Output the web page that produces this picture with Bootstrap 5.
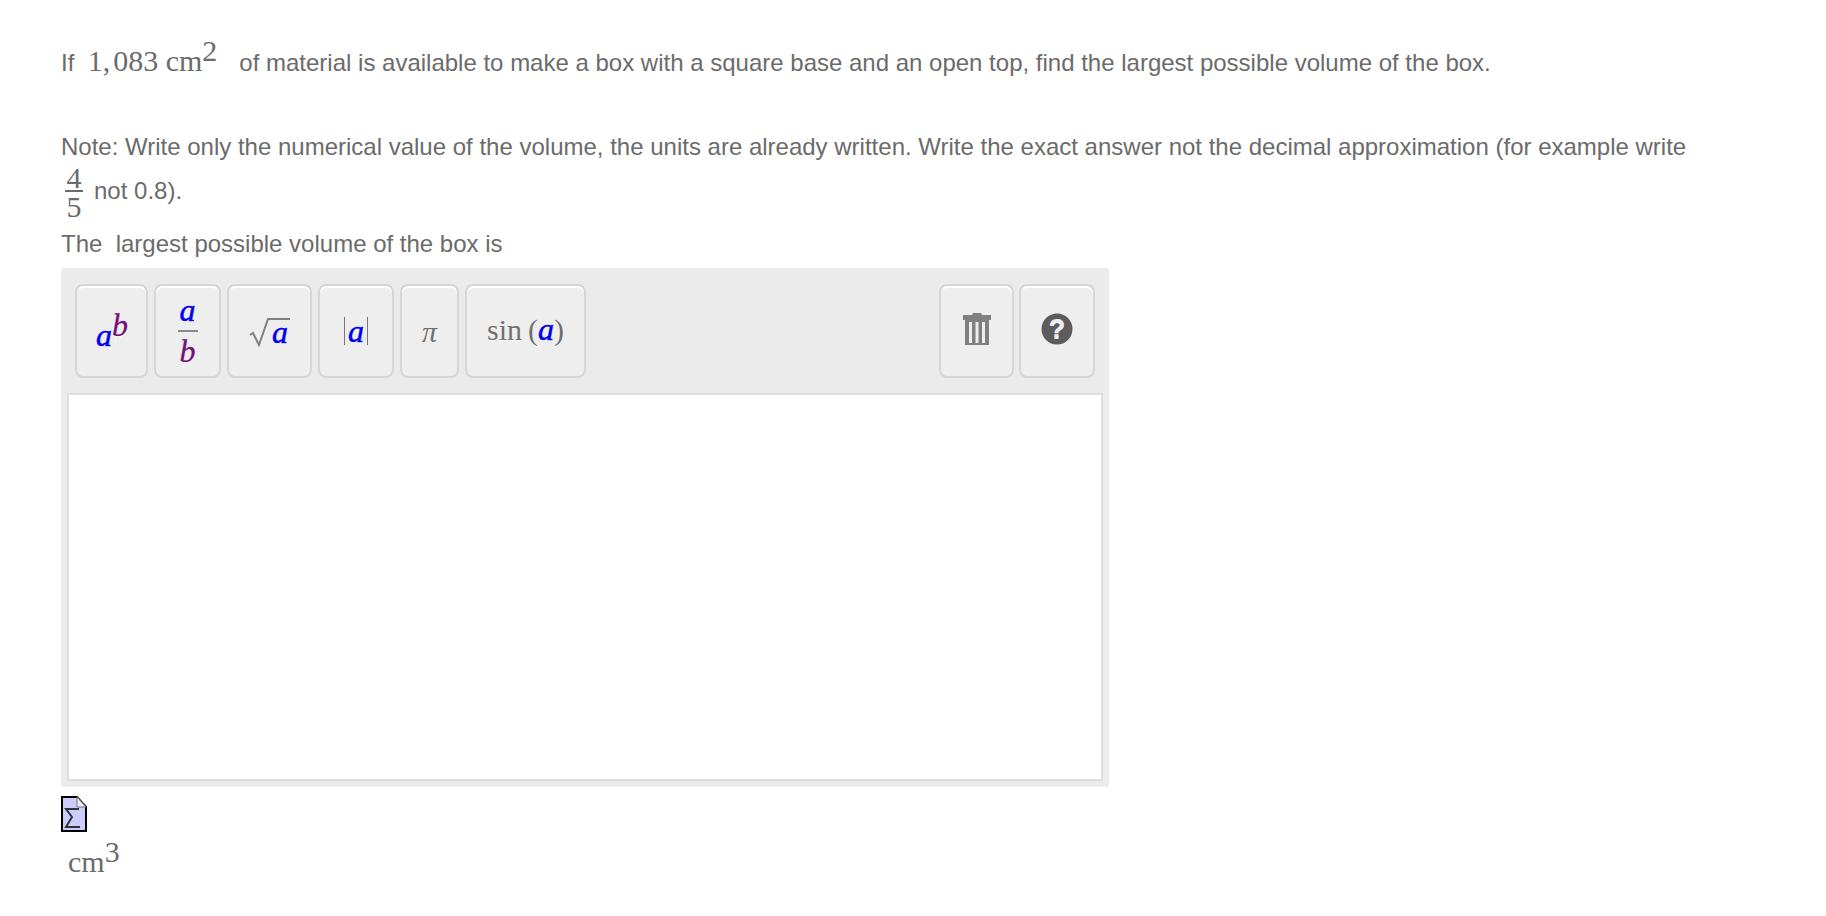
<!DOCTYPE html>
<html>
<head>
    <title>Box volume question</title>
    <link href="https://cdn.jsdelivr.net/npm/bootstrap@5.3.3/dist/css/bootstrap.min.css" rel="stylesheet">
    <style>
        body { font-family: "Liberation Sans", Arial, sans-serif; font-size: 24px; color: #6b6b6b; background: #fff; }
        .page-wrap { padding: 29px 61px 0 61px; }
        .q-line { margin: 0; line-height: 34px; }
        .q-first { height: 68px; line-height: 64px; margin-bottom: 33px; white-space: pre; }
        .q-note { height: 35px; white-space: nowrap; }
        .q-frac-line { height: 50px; margin-top: 2px; padding-left: 4px; display: flex; align-items: center; gap: 11px; }
        .q-frac-line > span:last-child { position: relative; top: -1px; }
        .q-ask { margin-top: 10px; height: 41px; white-space: pre; }
        .mth { font-family: "Liberation Serif", "Times New Roman", serif; font-size: 30px; margin-right: 2px; }
        .mth sup { font-size: 30px; top: -10px; line-height: 0; vertical-align: baseline; position: relative; }
        .cm-gap { margin-left: 3px; }
        .frac4 { display: inline-flex; flex-direction: column; align-items: center; font-family: "Liberation Serif", serif; font-size: 30px; line-height: 25px; width: 18px; }
        .frac4 span + span { border-top: 2px solid #6b6b6b; width: 18px; text-align: center; padding-top: 2px; }
        .mq-box { width: 1048px; height: 519px; background: #ebebeb; border-radius: 3px; padding: 16px 6px 5px 6px; }
        .mq-tools { height: 94px; padding: 0 8px; margin-bottom: 15px; }
        .mq-btn { height: 94px; background: #eee; border: 2px solid #d6d6d6; border-radius: 8px; box-shadow: inset 0 2px 0 #fff; font-family: "Liberation Serif", serif; font-size: 30px; color: #707070; padding: 0; display: flex; align-items: center; justify-content: center; text-shadow: 0 1px 0 #fff; }
        .mq-gap { gap: 6px; }
        .mq-gap-side { gap: 5px; }
        .w-pow { width: 73px; } .w-frac { width: 67px; } .w-sqrt { width: 85px; } .w-abs { width: 76px; }
        .w-pi { width: 59px; } .w-sin { width: 121px; } .w-side { width: 76px; } .w-trash { width: 75px; }
        .va { color: #0000f0; font-style: italic; font-size: 32px; -webkit-text-stroke: 0.5px #0000f0; line-height: 1; }
        .vb { color: #74107c; font-style: italic; font-size: 32px; -webkit-text-stroke: 0.3px #74107c; line-height: 1; }
        .pow-wrap { display: flex; align-items: flex-end; padding-top: 8px; padding-left: 1px; }
        .pow-b { position: relative; top: -10px; left: 0; }
        .btn-frac { display: flex; flex-direction: column; align-items: center; }
        .btn-frac .va { height: 36px; line-height: 32px; }
        .btn-frac .vb { border-top: 2px solid #8a8a8a; width: 20px; text-align: center; height: 38px; line-height: 38px; }
        .sq-wrap { display: flex; align-items: flex-start; margin-top: 4px; }
        .sq-bar { border-top: 2px solid #808080; padding: 0 2px 0 3px; height: 30px; line-height: 24px; }
        .abs-wrap { display: flex; align-items: center; gap: 3px; }
        .abs-bar { width: 1px; height: 28px; background: #777; }
        .sin-wrap { display: flex; align-items: baseline; white-space: pre; margin-bottom: 3px; }
        .side-ico { margin-bottom: 4px; }
        .mq-editor { height: 388px; background: #fff; border: 2px solid #dedede; }
        .mq-doc { display: block; margin-top: 9px; }
        .unit-line { margin: 0 0 0 7px; line-height: 40px; padding-top: 10px; }
    </style>
</head>
<body>
    <div class="page-wrap">
        <p class="q-line q-first">If  <span class="mth">1,<span class="cm-gap">083</span> cm<sup>2</sup></span>   of material is available to make a box with a square base and an open top, find the largest possible volume of the box.</p>
        <p class="q-line q-note">Note: Write only the numerical value of the volume, the units are already written. Write the exact answer not the decimal approximation (for example write</p>
        <div class="q-frac-line"><span class="frac4"><span>4</span><span>5</span></span><span>not 0.8).</span></div>
        <p class="q-line q-ask">The  largest possible volume of the box is</p>

        <div class="mq-box">
            <div class="mq-tools d-flex justify-content-between">
                <div class="d-flex mq-gap">
                    <button class="mq-btn w-pow" type="button"><span class="pow-wrap"><span class="va">a</span><span class="vb pow-b">b</span></span></button>
                    <button class="mq-btn w-frac" type="button"><span class="btn-frac"><span class="va">a</span><span class="vb">b</span></span></button>
                    <button class="mq-btn w-sqrt" type="button">
                        <span class="sq-wrap">
                            <svg width="20" height="30" viewBox="0 0 20 30"><path d="M1 17l3-2 6 12L19 1h1" fill="none" stroke="#808080" stroke-width="2"/></svg>
                            <span class="va sq-bar">a</span>
                        </span>
                    </button>
                    <button class="mq-btn w-abs" type="button"><span class="abs-wrap"><span class="abs-bar"></span><span class="va">a</span><span class="abs-bar"></span></span></button>
                    <button class="mq-btn w-pi" type="button"><span class="fst-italic">π</span></button>
                    <button class="mq-btn w-sin" type="button"><span class="sin-wrap">sin&thinsp;(<span class="va">a</span>)</span></button>
                </div>
                <div class="d-flex mq-gap-side">
                    <button class="mq-btn w-trash" type="button" aria-label="Clear">
                        <svg class="side-ico" width="28" height="32" viewBox="0 0 28 32">
                            <path fill="#808080" fill-rule="evenodd" d="M10 0h8l1 2h9v5H0V2h9zM2 7h24v25H2zM6 9v21h3V9zm6.500 0v21h3V9zM19 9v21h3V9z"/>
                        </svg>
                    </button>
                    <button class="mq-btn w-side" type="button" aria-label="Help">
                        <svg class="side-ico" width="32" height="32" viewBox="0 0 32 32">
                            <circle cx="16" cy="16" r="15.500" fill="#5c5c5c"/>
                            <text x="16" y="25" text-anchor="middle" fill="#eee" font-family="Liberation Sans, sans-serif" font-size="27" font-weight="700">?</text>
                        </svg>
                    </button>
                </div>
            </div>
            <div class="mq-editor"></div>
        </div>

        <svg class="mq-doc" width="26" height="36" viewBox="0 0 26 36">
            <path d="M1 1h15l9 10v24H1z" fill="#ccccff" stroke="#000" stroke-width="2"/>
            <path d="M16 1v10h9z" fill="#eee" stroke="#777" stroke-width="1"/>
            <path d="M18 13H5l6 8-6 10h14" fill="none" stroke="#333" stroke-width="2"/>
        </svg>
        <p class="unit-line"><span class="mth">cm<sup>3</sup></span></p>
    </div>
</body>
</html>
